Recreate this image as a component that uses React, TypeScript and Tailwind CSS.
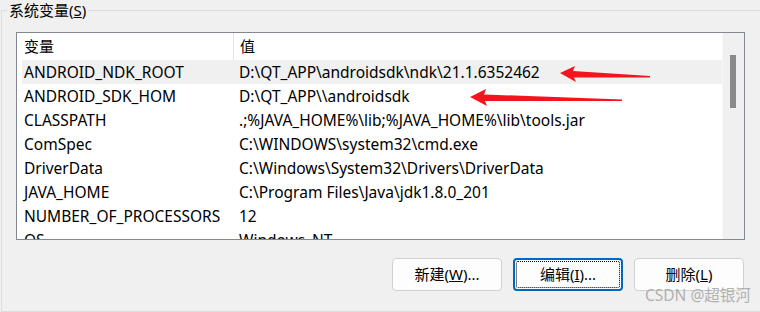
import React from 'react';

const rows: [string, string][] = [
  ['ANDROID_NDK_ROOT', 'D:\\QT_APP\\androidsdk\\ndk\\21.1.6352462'],
  ['ANDROID_SDK_HOM', 'D:\\QT_APP\\\\androidsdk'],
  ['CLASSPATH', '.;%JAVA_HOME%\\lib;%JAVA_HOME%\\lib\\tools.jar'],
  ['ComSpec', 'C:\\WINDOWS\\system32\\cmd.exe'],
  ['DriverData', 'C:\\Windows\\System32\\Drivers\\DriverData'],
  ['JAVA_HOME', 'C:\\Program Files\\Java\\jdk1.8.0_201'],
  ['NUMBER_OF_PROCESSORS', '12'],
  ['OS', 'Windows_NT'],
];

const font = { fontFamily: '"Noto Sans", "Noto Sans CJK SC", sans-serif' };

function Btn({ label, hot, rest, focused }: { label: string; hot: string; rest: string; focused?: boolean }) {
  return (
    <button
      className={`w-[110px] h-[33px] rounded-[4px] bg-[#fdfdfd] text-[15px] text-black flex items-center justify-center ${
        focused ? 'border-2 border-[#0067c0] p-[1px]' : 'border border-[#d0d0d0]'
      }`}
    >
      <span
        className={`w-full h-full flex items-center justify-center rounded-[2px] ${
          focused ? 'border border-dotted border-black' : ''
        }`}
      >
        {label}(<u>{hot}</u>){rest}
      </span>
    </button>
  );
}

export default function App() {
  return (
    <div className="relative w-[760px] h-[312px] overflow-hidden bg-[#f0f0f0] text-black" style={font}>
      <div className="pt-[10px] pl-[1px]">
        <div className="w-[800px] h-[302px] border-t border-l border-b border-[#dcdcdc] pl-[14px] pt-[21px]">
          {/* list view */}
          <div className="w-[729px] h-[208px] border border-[#828790] bg-white flex overflow-hidden">
            <div className="w-[705px] shrink-0 flex flex-col text-[15.5px]">
              <div className="h-[27px] shrink-0 flex items-center">
                <div className="w-[217px] h-full pl-[7px] flex items-center border-r border-[#e5e5e5] text-[15px]">变量</div>
                <div className="pl-[6px] text-[15px]">值</div>
              </div>
              {rows.map(([k, v], i) => (
                <div key={k} className={`h-[24px] shrink-0 flex items-center pt-[1px] ml-[5px] ${i === 0 ? 'bg-[#f0f0f0]' : ''}`}>
                  <div className="w-[217px] pl-[2px] whitespace-nowrap">{k}</div>
                  <div className="whitespace-nowrap">{v}</div>
                </div>
              ))}
            </div>
            <div className="w-[1px] bg-[#f7f7f7]" />
            <div className="flex-1 bg-[#f0f0f0] pt-[22px] pl-[7px]">
              <div className="w-[6px] h-[53px] bg-[#8a8a8a]" />
            </div>
          </div>
          {/* buttons */}
          <div className="w-[729px] mt-[18px] flex justify-end gap-[11px] pr-[1px]">
            <Btn label="新建" hot="W" rest="..." />
            <Btn label="编辑" hot="I" rest="..." focused />
            <Btn label="删除" hot="L" rest="" />
          </div>
        </div>
      </div>

      {/* group title */}
      <div className="absolute left-[7px] top-[0px] px-[2px] bg-[#f0f0f0] text-[15px] leading-[20px]">
        系统变量(<u>S</u>)
      </div>

      {/* watermark */}
      <div className="absolute left-[645px] top-[286px] text-[15.5px] leading-[18px] text-[#a8a8a8]/90 whitespace-nowrap">
        CSDN @超银河
      </div>

      {/* annotation arrows */}
      <svg className="absolute left-0 top-0 pointer-events-none" width="760" height="312">
        <polygon points="560,73 575,66 573,71 650,76 650,77.5 574,77.5 576,82" fill="#f5141e" />
        <polygon points="470,97 486,89 484,94.5 622,99.5 622,101 485,101 487,106" fill="#f5141e" />
      </svg>
    </div>
  );
}
